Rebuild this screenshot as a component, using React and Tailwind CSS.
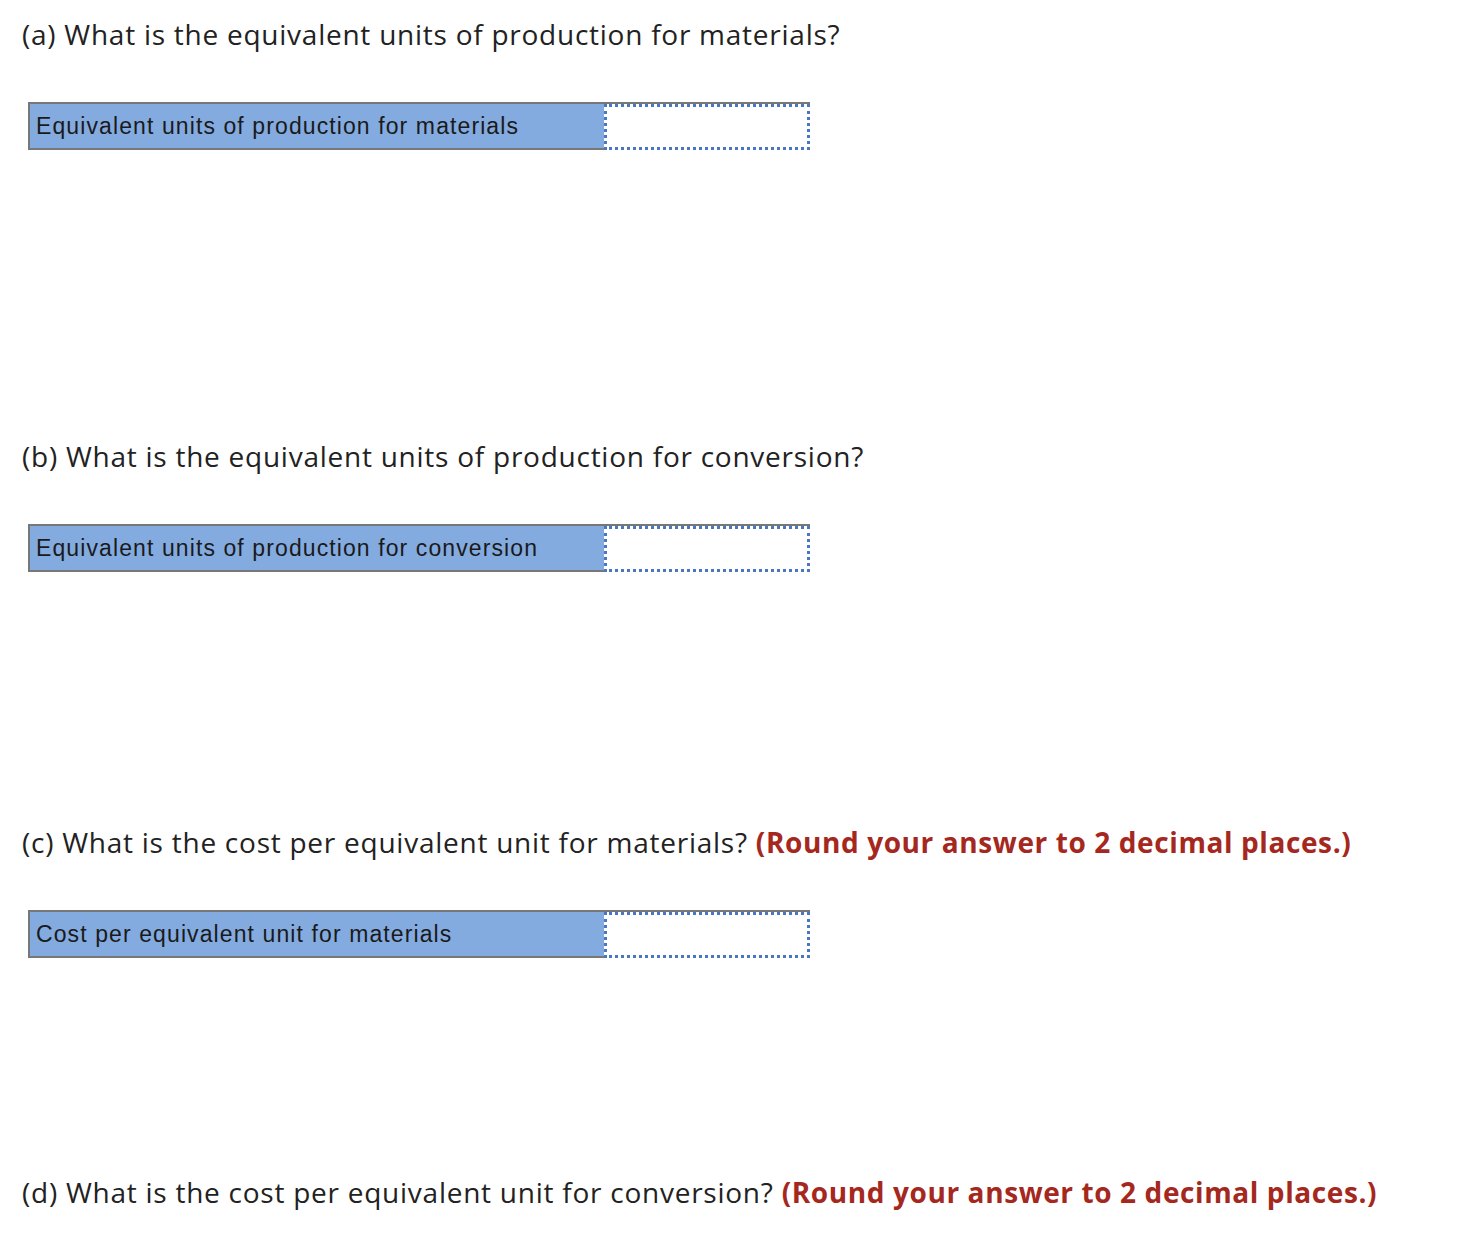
const questions = [
  {
    q: "(a) What is the equivalent units of production for materials?",
    label: "Equivalent units of production for materials",
    mt: "mt-0",
  },
  {
    q: "(b) What is the equivalent units of production for conversion?",
    label: "Equivalent units of production for conversion",
    mt: "mt-[286px]",
  },
  {
    q: "(c) What is the cost per equivalent unit for materials?",
    label: "Cost per equivalent unit for materials",
    note: true,
    mt: "mt-[250px]",
  },
];

function AnswerRow({ label }) {
  return (
    <div className="ml-[6px] mt-[48px] flex h-[48px] w-[782px]">
      <div className="flex w-[578px] items-center border-2 border-[#777777] bg-[#84abe0] pl-[6px] font-['Liberation_Sans',Arial,sans-serif] text-[23px] tracking-[1.1px] text-[#1a1a1a]">
        {label}
      </div>
      <div className="flex w-[204px] flex-col border-t-2 border-[#777777]">
        <input
          type="text"
          className="-ml-[2px] h-full w-[206px] border-[3px] border-dotted border-[#4a77c1] bg-white outline-none"
        />
      </div>
    </div>
  );
}

export default function App() {
  return (
    <div className="min-h-screen bg-white pl-[22px] pt-[14px] font-['Open_Sans',sans-serif] text-[#222222]">
      {questions.map((item) => (
        <div key={item.q} className={item.mt}>
          <p className="text-[28px] leading-[40px] tracking-[0.75px]">
            {item.q}{" "}
            {item.note && (
              <span className="font-bold tracking-[0.6px] text-[#a5281e]">
                (Round your answer to 2 decimal places.)
              </span>
            )}
          </p>
          <AnswerRow label={item.label} />
        </div>
      ))}
      <p className="mt-[214px] text-[28px] leading-[40px] tracking-[0.75px]">
        (d) What is the cost per equivalent unit for conversion?{" "}
        <span className="font-bold tracking-[0.6px] text-[#a5281e]">
          (Round your answer to 2 decimal places.)
        </span>
      </p>
    </div>
  );
}
